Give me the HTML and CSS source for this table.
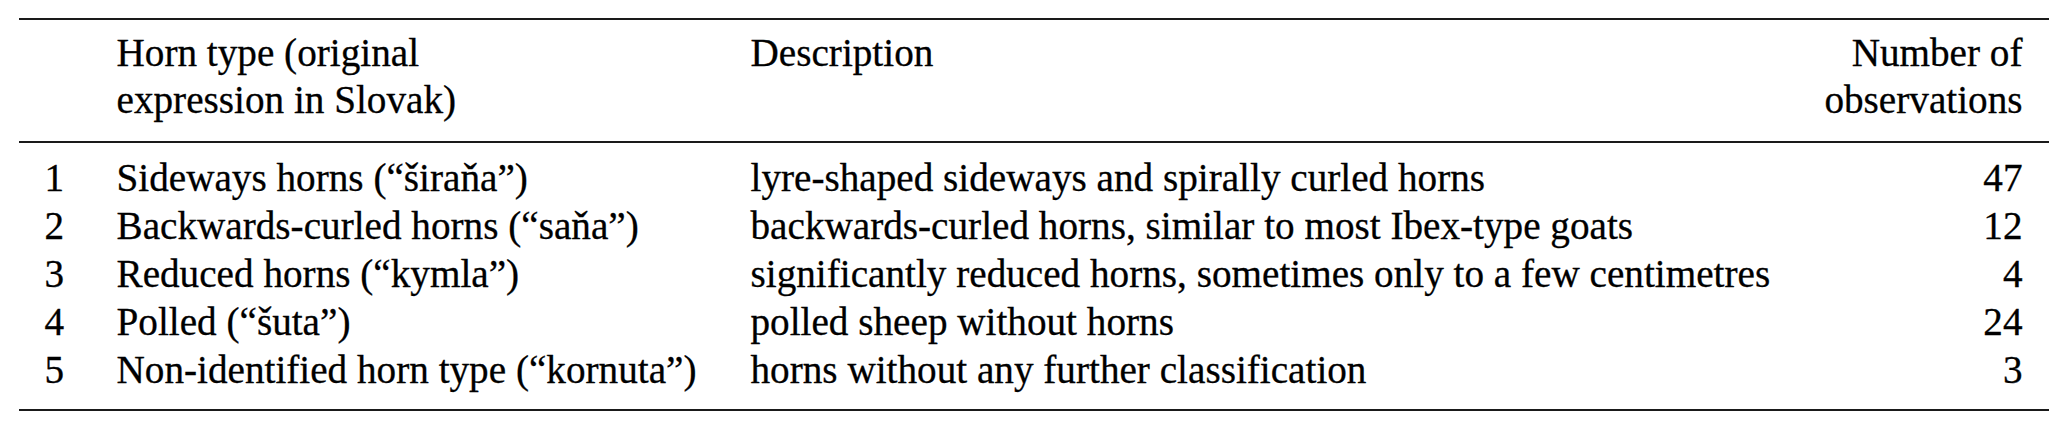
FILE: index.html
```html
<!DOCTYPE html>
<html lang="en">
<head>
<meta charset="utf-8">
<title>Horn types</title>
<link rel="stylesheet" href="styles.css">
</head>
<body>
<table class="horns">
  <colgroup>
    <col class="c-num">
    <col class="c-type">
    <col class="c-desc">
    <col class="c-obs">
  </colgroup>
  <thead>
    <tr>
      <th class="num"></th>
      <th class="type">Horn type (original<br>expression in Slovak)</th>
      <th class="desc">Description</th>
      <th class="obs">Number of<br>observations</th>
    </tr>
  </thead>
  <tbody>
    <tr class="first">
      <td class="num">1</td>
      <td class="type">Sideways horns (“širaňa”)</td>
      <td class="desc">lyre-shaped sideways and spirally curled horns</td>
      <td class="obs">47</td>
    </tr>
    <tr>
      <td class="num">2</td>
      <td class="type">Backwards-curled horns (“saňa”)</td>
      <td class="desc">backwards-curled horns, similar to most Ibex-type goats</td>
      <td class="obs">12</td>
    </tr>
    <tr>
      <td class="num">3</td>
      <td class="type">Reduced horns (“kymla”)</td>
      <td class="desc">significantly reduced horns, sometimes only to a few centimetres</td>
      <td class="obs">4</td>
    </tr>
    <tr>
      <td class="num">4</td>
      <td class="type">Polled (“šuta”)</td>
      <td class="desc">polled sheep without horns</td>
      <td class="obs">24</td>
    </tr>
    <tr class="last">
      <td class="num">5</td>
      <td class="type">Non-identified horn type (“kornuta”)</td>
      <td class="desc">horns without any further classification</td>
      <td class="obs">3</td>
    </tr>
  </tbody>
</table>
</body>
</html>
```

FILE: styles.css
```css
html, body {
  margin: 0;
  padding: 0;
  background: #ffffff;
}

body {
  padding-top: 18px;
  font-family: "Liberation Serif", "Times New Roman", serif;
  font-size: 39.2px;
  color: #000000;
  -webkit-text-stroke: 0.3px #000000;
}

.horns {
  width: 2030px;
  margin: 0 auto;
  table-layout: fixed;
  border-collapse: separate;
  border-spacing: 0;
  border-top: 2px solid #1a1a1a;
  border-bottom: 2px solid #1a1a1a;
}

.c-num { width: 98px; }
.c-type { width: 634px; }
.c-desc { width: 1000px; }
.c-obs { width: 298px; }

.horns th,
.horns td {
  padding: 0;
  font-weight: normal;
  text-align: left;
  vertical-align: top;
  white-space: nowrap;
}

.horns th {
  line-height: 47px;
  padding-top: 9px;
  padding-bottom: 18px;
  border-bottom: 2px solid #1a1a1a;
}

.horns td {
  line-height: 48px;
}

.horns .num {
  padding-left: 26px;
}

.horns .obs {
  text-align: right;
  padding-right: 26px;
}

.horns tr.first td {
  padding-top: 11px;
}

.horns tr.last td {
  padding-bottom: 15px;
}
```
